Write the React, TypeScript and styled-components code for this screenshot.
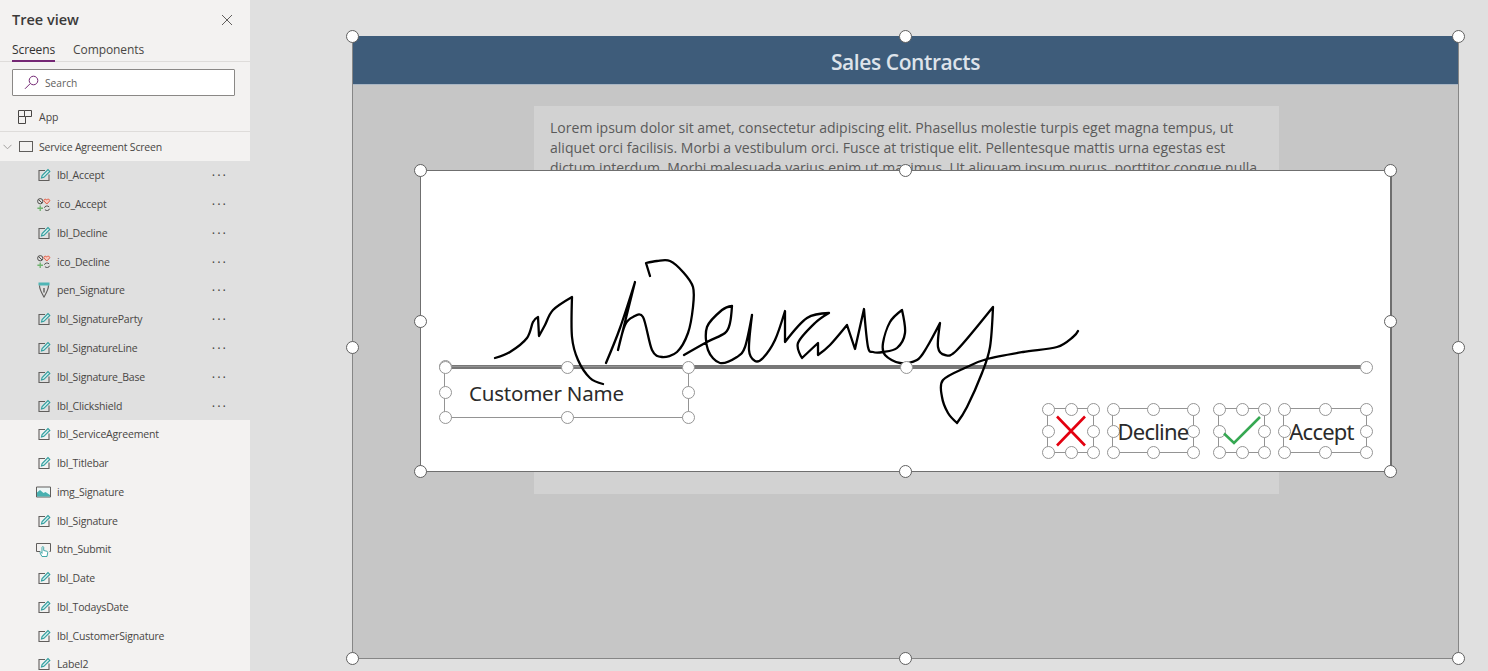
import React from "react";
import styled, { createGlobalStyle } from "styled-components";

const GlobalStyle = createGlobalStyle`
  html, body {
    margin: 0;
    height: 100%;
    overflow: hidden;
    background: #e0e0e0;
    font-family: "Open Sans", "Noto Sans", sans-serif;
  }
  * { box-sizing: border-box; }
`;

const Shell = styled.div`
  display: flex;
  width: 100%;
  height: 100vh;
  overflow: hidden;
`;

// tree view panel
const Sidebar = styled.aside`
  width: 250px;
  flex: none;
  height: 100%;
  overflow: hidden;
  background: #f3f2f1;
  color: #323130;
`;

const PanelHeader = styled.div`
  display: flex;
  align-items: center;
  justify-content: space-between;
  height: 39px;
  padding: 0 17px 0 12px;
  font-size: 14.5px;
  font-weight: 600;
  color: #3b3a39;
`;

const Tabs = styled.div`
  display: flex;
  gap: 18px;
  height: 23px;
  padding: 0 12px;
  border-bottom: 1px solid #dedcda;
`;

const Tab = styled.div<{ $active?: boolean }>`
  height: 23px;
  font-size: 12px;
  line-height: 21px;
  letter-spacing: -0.1px;
  color: ${(p) => (p.$active ? "#323130" : "#484644")};
  border-bottom: ${(p) => (p.$active ? "2px solid #742774" : "none")};
`;

const SearchBox = styled.div`
  display: flex;
  align-items: center;
  gap: 6px;
  height: 27px;
  margin: 7px 15px 0 12px;
  padding-left: 11px;
  background: #fff;
  border: 1px solid #8a8886;
  border-radius: 1px;
  font-size: 10.2px;
  color: #605e5c;
`;

const AppRow = styled.div`
  display: flex;
  align-items: center;
  gap: 7px;
  height: 36px;
  padding: 7px 0 0 18px;
  border-bottom: 1px solid #dedcda;
  font-size: 10.5px;
  color: #484644;
`;

const ScreenRow = styled.div`
  display: flex;
  align-items: center;
  height: 29px;
  padding-left: 3px;
  font-size: 10.5px;
  letter-spacing: -0.2px;
  color: #484644;
`;

const ScreenBox = styled.span`
  width: 14px;
  height: 11px;
  margin: 0 6px 0 7px;
  border: 1px solid #605e5c;
`;

const TreeRow = styled.div<{ $selected?: boolean }>`
  display: flex;
  align-items: center;
  height: 28.77px;
  padding: 0 22px 0 36px;
  background: ${(p) => (p.$selected ? "#e0e0e0" : "transparent")};
  font-size: 10.5px;
  letter-spacing: -0.18px;
  color: #484644;
`;

const RowIcon = styled.span`
  display: flex;
  align-items: center;
  justify-content: center;
  width: 15px;
  margin-right: 6px;
`;

const RowName = styled.span`
  flex: 1;
  white-space: nowrap;
`;

const MoreDots = styled.span`
  font-size: 13px;
  line-height: 10px;
  letter-spacing: 2px;
  color: #484644;
`;

// canvas
const Canvas = styled.main`
  position: relative;
  flex: 1;
  height: 100%;
  background: #e0e0e0;
`;

const ScreenFrame = styled.div`
  position: absolute;
  left: 102px;
  top: 36px;
  width: 1106px;
  height: 622px;
  background: #c6c6c6;
  box-shadow: inset 1px 0 0 #868686, 1px 0 0 #868686, 1px 1px 0 #868686;
`;

const TitleBar = styled.div`
  display: flex;
  align-items: center;
  justify-content: center;
  height: 49px;
  margin-left: 1px;
  padding-top: 3px;
  background: #3e5c7a;
  border-bottom: 1px solid #a9b6c4;
  font-size: 21px;
  font-weight: 600;
  letter-spacing: -0.42px;
  color: #dde3ea;
`;

const AgreementCard = styled.div`
  width: 745px;
  height: 388px;
  margin: 21px 0 0 182px;
  padding: 12px 16px;
  background: #d2d2d2;
`;

const AgreementLine = styled.div`
  font-size: 14.04px;
  line-height: 20px;
  white-space: nowrap;
  color: #5a5a5a;
`;

const SignaturePopup = styled.div`
  position: absolute;
  left: 68px;
  top: 134px;
  width: 970px;
  height: 301px;
  background: #fff;
  box-shadow: inset 1px 1px 0 #6f6f6f, 2px 1px 0 #6f6f6f;
`;

const SignatureDrawing = styled.svg`
  position: absolute;
  left: 0;
  top: 0;
  width: 970px;
  height: 301px;
  pointer-events: none;
  z-index: 1;
`;

const SignatureLine = styled.div`
  position: absolute;
  left: 25px;
  top: 195px;
  width: 921px;
  height: 4px;
  background: #777;
`;

const Selection = styled.div<{ $w: number; $h: number; $ml?: number }>`
  position: relative;
  flex: none;
  display: flex;
  align-items: center;
  justify-content: center;
  width: ${(p) => p.$w}px;
  height: ${(p) => p.$h}px;
  margin-left: ${(p) => p.$ml ?? 0}px;
  box-shadow: 0 0 0 1px #949494;
`;

const NameSelection = styled(Selection)`
  position: absolute;
  left: 25px;
  top: 197px;
  justify-content: flex-start;
  padding: 2px 0 0 24px;
`;

const AcceptSelection = styled(Selection)`
  padding-right: 7px;
`;

const ActionRow = styled.div`
  position: absolute;
  left: 628px;
  top: 239px;
  display: flex;
  z-index: 2;
`;

const FieldText = styled.span`
  position: relative;
  font-family: "Noto Sans", "Open Sans", sans-serif;
  font-size: 20.5px;
  letter-spacing: -0.22px;
  white-space: nowrap;
  color: #2b2b2b;
`;

const ActionText = styled(FieldText)`
  z-index: 4;
  font-size: 22px;
  letter-spacing: -0.8px;
`;

const ActionGlyph = styled.svg`
  position: relative;
  z-index: 4;
  flex: none;
`;

const Handle = styled.span<{ $x: number; $y: number; $dark?: boolean }>`
  position: absolute;
  z-index: 3;
  left: ${(p) => p.$x}%;
  top: ${(p) => p.$y}%;
  width: 13px;
  height: 13px;
  margin: -6px 0 0 -6px;
  border-radius: 50%;
  background: #fff;
  border: ${(p) => (p.$dark ? "1px solid #606060" : "1.5px solid #959595")};
`;

const handleSpots = [
  [0, 0],
  [50, 0],
  [100, 0],
  [0, 50],
  [100, 50],
  [0, 100],
  [50, 100],
  [100, 100],
];

const Handles = ({ dark }: { dark?: boolean }) => (
  <>
    {handleSpots.map(([x, y]) => (
      <Handle key={`${x}-${y}`} $x={x} $y={y} $dark={dark} />
    ))}
  </>
);

const LabelIcon = () => (
  <svg width="14" height="14" viewBox="0 0 14 14" fill="none">
    <path d="M8 2.5H2v10h10V6.500" stroke="#605e5c" strokeWidth="1.1" />
    <path d="M4.500 10l.6-2.400L11 1.600l1.800 1.800-5.900 5.900z" stroke="#2f9e9e" strokeWidth="1.1" fill="#d5eeee" />
  </svg>
);

const ControlsIcon = () => (
  <svg width="16" height="15" viewBox="0 0 16 15" fill="none">
    <circle cx="4.500" cy="4" r="2.800" stroke="#484644" strokeWidth="1" />
    <path d="M2.600 2.200l3.800 3.600" stroke="#484644" />
    <path d="M11.500 7l-3-3.200c-.9-1.600 1.800-2.800 3-1.200 1.200-1.600 3.900-.4 3 1.200z" stroke="#e0533c" strokeWidth="1" fill="#f7c9bf" />
    <path d="M4.500 8.500v6M1.500 11.500h6" stroke="#6fb36f" strokeWidth="1.400" />
    <path d="M9 11c.2-2 3.600-2.600 5-1M14.500 12c-.2 2-3.600 2.600-5 1" stroke="#484644" strokeWidth="1" />
  </svg>
);

const PenIcon = () => (
  <svg width="14" height="16" viewBox="0 0 14 16" fill="none">
    <path d="M1.500 0.500h11v3h-11z" fill="#4fb5b5" />
    <path d="M2.500 3.500c0 4 2 7 4.500 11.500 2.500-4.500 4.500-7.500 4.500-11.500" stroke="#605e5c" strokeWidth="1.100" />
    <path d="M7 6v4.500" stroke="#484644" strokeWidth="1.200" />
  </svg>
);

const ImageIcon = () => (
  <svg width="15" height="12" viewBox="0 0 15 12" fill="none">
    <path d="M.5 1h14v10H.5z" fill="#eef6f6" stroke="#605e5c" />
    <path d="M1 10.500V6.500l3-2.500 3.500 3 2-1 4.500 3v1.500z" fill="#48b0b0" />
  </svg>
);

const ButtonIcon = () => (
  <svg width="15" height="15" viewBox="0 0 15 15" fill="none">
    <path d="M4 9.500H.5v-8h14v8h-1" stroke="#605e5c" />
    <path d="M6 14.500l-2-3.500c-.3-1 .8-1.300 1.300-.6l.7 1V5.500c0-1.200 1.700-1.200 1.700 0V8.500l3.300.8c.6.2.8.7.7 1.300l-.7 3.900z" fill="#fff" stroke="#2f9e9e" strokeWidth=".9" />
  </svg>
);

const CloseIcon = () => (
  <svg width="12" height="12" viewBox="0 0 12 12" fill="none">
    <path d="M1 1l10 10M11 1L1 11" stroke="#605e5c" strokeWidth="1" />
  </svg>
);

const SearchIcon = () => (
  <svg width="15" height="15" viewBox="0 0 15 15" fill="none">
    <circle cx="9.500" cy="5.500" r="4.300" stroke="#742774" strokeWidth="1" />
    <path d="M6.300 8.500L1 13.800" stroke="#742774" strokeWidth="1" />
  </svg>
);

const AppIcon = () => (
  <svg width="14" height="14" viewBox="0 0 14 14" fill="none">
    <path d="M.5 6.500h7v7h-7zM.5 6.500V.5h6v6M6.500.5h7v6h-6" stroke="#484644" strokeWidth="1" />
  </svg>
);

const Chevron = () => (
  <svg width="9" height="6" viewBox="0 0 9 6" fill="none">
    <path d="M.5.8l4 4 4-4" stroke="#a19f9d" strokeWidth="1" />
  </svg>
);

const treeItems: { name: string; icon: React.ReactNode; selected?: boolean }[] = [
  { name: "lbl_Accept", icon: <LabelIcon />, selected: true },
  { name: "ico_Accept", icon: <ControlsIcon />, selected: true },
  { name: "lbl_Decline", icon: <LabelIcon />, selected: true },
  { name: "ico_Decline", icon: <ControlsIcon />, selected: true },
  { name: "pen_Signature", icon: <PenIcon />, selected: true },
  { name: "lbl_SignatureParty", icon: <LabelIcon />, selected: true },
  { name: "lbl_SignatureLine", icon: <LabelIcon />, selected: true },
  { name: "lbl_Signature_Base", icon: <LabelIcon />, selected: true },
  { name: "lbl_Clickshield", icon: <LabelIcon />, selected: true },
  { name: "lbl_ServiceAgreement", icon: <LabelIcon /> },
  { name: "lbl_Titlebar", icon: <LabelIcon /> },
  { name: "img_Signature", icon: <ImageIcon /> },
  { name: "lbl_Signature", icon: <LabelIcon /> },
  { name: "btn_Submit", icon: <ButtonIcon /> },
  { name: "lbl_Date", icon: <LabelIcon /> },
  { name: "lbl_TodaysDate", icon: <LabelIcon /> },
  { name: "lbl_CustomerSignature", icon: <LabelIcon /> },
  { name: "Label2", icon: <LabelIcon /> },
];

const agreementLines = [
  "Lorem ipsum dolor sit amet, consectetur adipiscing elit. Phasellus molestie turpis eget magna tempus, ut",
  "aliquet orci facilisis. Morbi a vestibulum orci. Fusce at tristique elit. Pellentesque mattis urna egestas est",
  "dictum interdum. Morbi malesuada varius enim ut maximus. Ut aliquam ipsum purus, porttitor congue nulla",
];

// signature strokes, in page coordinates
const strokes: number[][][] = [
  [[495,358],[510,352],[527,338],[533,322],[538,317],[539,336],[545,325],[553,310],[572,297],[572,337],[578,360],[590,378],[603,384]],
  [[606,363],[620,328],[635,282],[618,350],[625,325],[633,317],[643,317],[652,350],[662,357],[677,352],[688,333],[693,307],[693,287],[683,272],[670,261],[657,261],[646,263],[650,276]],
  [[684,355],[707,342],[725,333],[730,323],[732,306],[722,310],[707,327],[708,350],[720,363],[737,357],[745,347],[752,315],[749,350],[755,361],[763,358],[775,340],[785,311],[785,342],[807,318],[829,313],[815,323],[798,343],[802,358],[818,343],[818,355],[830,345],[847,325],[855,349],[864,309],[868,347],[873,352],[883,352],[897,348],[905,333],[902,310],[890,322],[883,343],[885,355],[900,363],[917,360],[927,347],[940,323],[938,347],[945,355],[957,350],[993,307],[990,347],[982,373],[967,407],[957,423],[948,413],[942,397],[943,380],[967,367],[987,359],[1023,352],[1057,347],[1073,337],[1078,331]],
];

// smooth line through the points, keeps the pen's sharp turns
const toPath = (pts: number[][]) => {
  const tangent = (i: number) => {
    const prev = pts[i - 1] || pts[i];
    const next = pts[i + 1] || pts[i];
    const cur = pts[i];
    const ax = cur[0] - prev[0];
    const ay = cur[1] - prev[1];
    const bx = next[0] - cur[0];
    const by = next[1] - cur[1];
    const cos = (ax * bx + ay * by) / (Math.hypot(ax, ay) * Math.hypot(bx, by) || 1);
    if (cos < 0.1) return [0, 0];
    return [(next[0] - prev[0]) * 0.16, (next[1] - prev[1]) * 0.16];
  };
  let d = `M${pts[0][0]} ${pts[0][1]}`;
  for (let i = 0; i < pts.length - 1; i++) {
    const t1 = tangent(i);
    const t2 = tangent(i + 1);
    const p = pts[i];
    const q = pts[i + 1];
    d += `C${p[0] + t1[0]} ${p[1] + t1[1]} ${q[0] - t2[0]} ${q[1] - t2[1]} ${q[0]} ${q[1]}`;
  }
  return d;
};

const App = () => {
  return (
    <Shell>
      <GlobalStyle />
      <Sidebar>
        <PanelHeader>
          Tree view
          <CloseIcon />
        </PanelHeader>
        <Tabs>
          <Tab $active>Screens</Tab>
          <Tab>Components</Tab>
        </Tabs>
        <SearchBox>
          <SearchIcon />
          Search
        </SearchBox>
        <AppRow>
          <AppIcon />
          App
        </AppRow>
        <ScreenRow>
          <Chevron />
          <ScreenBox />
          Service Agreement Screen
        </ScreenRow>
        {treeItems.map((item) => (
          <TreeRow key={item.name} $selected={item.selected}>
            <RowIcon>{item.icon}</RowIcon>
            <RowName>{item.name}</RowName>
            {item.selected && <MoreDots>···</MoreDots>}
          </TreeRow>
        ))}
      </Sidebar>
      <Canvas>
        <ScreenFrame>
          <TitleBar>Sales Contracts</TitleBar>
          <AgreementCard>
            {agreementLines.map((line) => (
              <AgreementLine key={line}>{line}</AgreementLine>
            ))}
          </AgreementCard>
          <SignaturePopup>
            <SignatureLine>
              <Handle $x={0} $y={25} />
              <Handle $x={50} $y={50} />
              <Handle $x={100} $y={50} />
            </SignatureLine>
            <NameSelection $w={243} $h={50}>
              <FieldText>Customer Name</FieldText>
              <Handles />
            </NameSelection>
            <ActionRow>
              <Selection $w={45} $h={43}>
                <ActionGlyph width="34" height="32" viewBox="0 0 34 32" fill="none">
                  <path d="M3 1.500l28 29M31 1.500l-28 29" stroke="#e3000f" strokeWidth="2.600" />
                </ActionGlyph>
                <Handles />
              </Selection>
              <Selection $w={80} $h={43} $ml={20}>
                <ActionText>Decline</ActionText>
                <Handles />
              </Selection>
              <Selection $w={45} $h={43} $ml={26}>
                <ActionGlyph width="40" height="30" viewBox="0 0 40 30" fill="none">
                  <path d="M2 17.500L12 27 38 1" stroke="#36a852" strokeWidth="2.600" />
                </ActionGlyph>
                <Handles />
              </Selection>
              <AcceptSelection $w={82} $h={43} $ml={20}>
                <ActionText>Accept</ActionText>
                <Handles />
              </AcceptSelection>
            </ActionRow>
            <SignatureDrawing viewBox="420 170 970 301">
              {strokes.map((pts, i) => (
                <path key={i} d={toPath(pts)} fill="none" stroke="#000" strokeWidth="2.300" strokeLinejoin="round" strokeLinecap="round" />
              ))}
            </SignatureDrawing>
            <Handles dark />
          </SignaturePopup>
          <Handles dark />
        </ScreenFrame>
      </Canvas>
    </Shell>
  );
};

export default App;
